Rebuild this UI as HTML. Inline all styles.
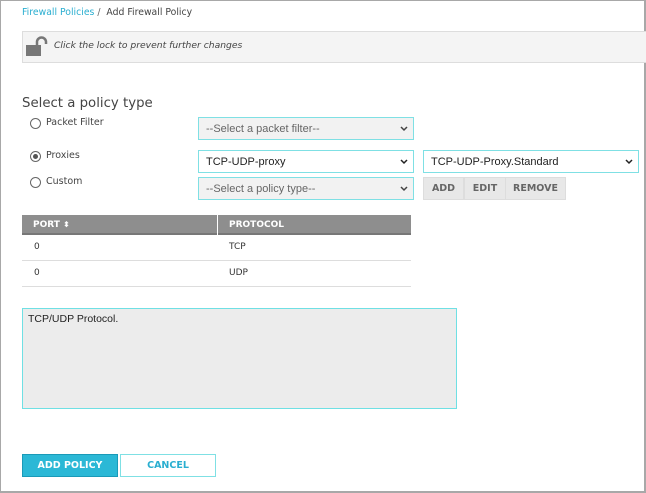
<!DOCTYPE html>
<html><head><style>
*{box-sizing:border-box;margin:0;padding:0}
body{width:646px;height:493px;background:#fff;font-family:"DejaVu Sans","Liberation Sans",sans-serif;position:relative;overflow:hidden;color:#333}
.frame{position:absolute;left:0;top:0;width:646px;height:493px;border:1px solid #a8a8a8;border-bottom-width:2px;border-right-width:2px}
.a{position:absolute}
.sel{position:absolute;height:23px;border:1px solid #7fe0e4;font-family:"Liberation Sans",sans-serif;font-size:11px;padding:5px 7px;color:#222;background:#fff}
.sel.g{background:#f2f2f2;color:#666}
.sel svg{position:absolute;right:5px;top:8px}
.radio{position:absolute;width:11px;height:11px;border:1px solid #666;border-radius:50%;background:#fff}
.lbl{position:absolute;font-size:9.5px;color:#444}
.btn{position:absolute;top:177px;height:23px;background:#e8e8e8;border:1px solid #ddd;font-size:9.5px;font-weight:bold;color:#666;text-align:center;line-height:21px}
.th{position:absolute;top:215px;height:20px;background:#8e8e8e;color:#fff;font-size:9px;font-weight:bold;line-height:20px;padding-left:11px;border-bottom:2px solid #777}
.td{position:absolute;font-size:9px;color:#333}
.hr{position:absolute;left:22px;width:389px;height:1px;background:#ddd}
</style></head><body>
<div class="frame"></div>
<div class="a" style="left:22px;top:7px;font-size:9.3px;color:#666;white-space:nowrap"><span style="color:#2aaed0">Firewall Policies</span> / &nbsp;<span style="color:#444">Add Firewall Policy</span></div>
<div class="a" style="left:22px;top:31px;width:626px;height:32px;background:#f4f4f4;border:1px solid #ddd"></div>
<svg class="a" style="left:25px;top:36px" width="24" height="22" viewBox="0 0 24 22"><rect x="1" y="9" width="15" height="11" fill="#777"/><path d="M12 9V6a4.5 4.5 0 0 1 9 0v2" stroke="#777" stroke-width="2.5" fill="none"/></svg>
<div class="a" style="left:54px;top:40px;font-size:9.2px;font-style:italic;color:#444;white-space:nowrap">Click the lock to prevent further changes</div>
<div class="a" style="left:22px;top:96px;font-size:13.3px;color:#444;white-space:nowrap">Select a policy type</div>
<div class="radio" style="left:30px;top:118px"></div><div class="lbl" style="left:46px;top:117px">Packet Filter</div>
<div class="radio" style="left:30px;top:151px"><div style="position:absolute;left:2px;top:2px;width:5px;height:5px;border-radius:50%;background:#555"></div></div><div class="lbl" style="left:46px;top:150px">Proxies</div>
<div class="radio" style="left:30px;top:177px"></div><div class="lbl" style="left:46px;top:176px">Custom</div>
<div class="sel g" style="left:198px;top:117px;width:216px">--Select a packet filter--<svg width="8" height="6"><path d="M1 1l3 3 3-3" stroke="#444" stroke-width="1.5" fill="none"/></svg></div>
<div class="sel" style="left:198px;top:150px;width:216px">TCP-UDP-proxy<svg width="8" height="6"><path d="M1 1l3 3 3-3" stroke="#222" stroke-width="1.5" fill="none"/></svg></div>
<div class="sel g" style="left:198px;top:177px;width:216px">--Select a policy type--<svg width="8" height="6"><path d="M1 1l3 3 3-3" stroke="#444" stroke-width="1.5" fill="none"/></svg></div>
<div class="sel" style="left:423px;top:150px;width:216px">TCP-UDP-Proxy.Standard<svg width="8" height="6"><path d="M1 1l3 3 3-3" stroke="#222" stroke-width="1.5" fill="none"/></svg></div>
<div class="btn" style="left:423px;width:41px">ADD</div>
<div class="btn" style="left:464px;width:42px">EDIT</div>
<div class="btn" style="left:505px;width:61px">REMOVE</div>
<div class="th" style="left:22px;width:195px">PORT <span style="font-size:8px">⬍</span></div>
<div class="th" style="left:218px;width:193px">PROTOCOL</div>
<div class="td" style="left:34px;top:242px">0</div><div class="td" style="left:229px;top:242px">TCP</div>
<div class="hr" style="top:260px"></div>
<div class="td" style="left:34px;top:268px">0</div><div class="td" style="left:229px;top:268px">UDP</div>
<div class="hr" style="top:286px"></div>
<div class="a" style="left:22px;top:308px;width:435px;height:101px;background:#ececec;border:1px solid #6fe0e4;font-family:'Liberation Sans',sans-serif;font-size:10.5px;padding:4px 5px;color:#222">TCP/UDP Protocol.</div>
<div class="a" style="left:22px;top:454px;width:96px;height:23px;background:#2bb8d6;border:1px solid #1a9ab8;color:#fff;font-size:9.5px;font-weight:bold;text-align:center;line-height:21px">ADD POLICY</div>
<div class="a" style="left:120px;top:454px;width:96px;height:23px;background:#fff;border:1px solid #7fe0e4;color:#2aaed0;font-size:9.5px;font-weight:bold;text-align:center;line-height:21px">CANCEL</div>
</body></html>
